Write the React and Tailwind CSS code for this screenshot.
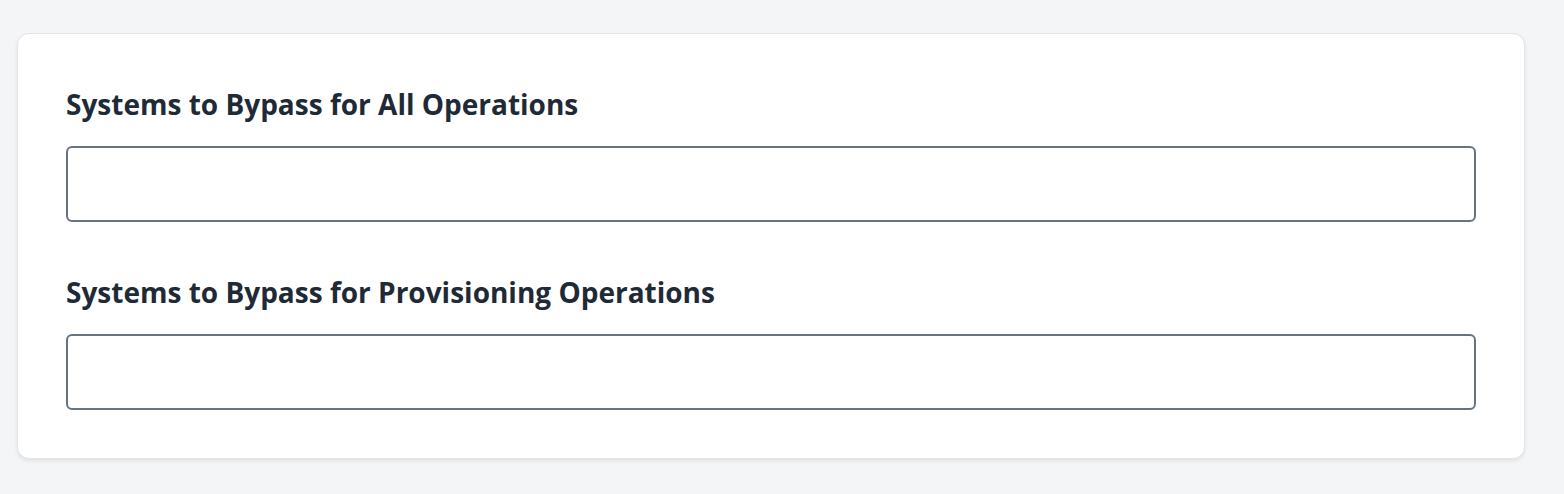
export default function App() {
  const labelCls = "block text-[28px] leading-[32px] font-bold text-[#1f2a37] tracking-[0px]";
  const inputCls = "block w-full h-[76px] rounded-[6px] border-2 border-[#667482] bg-white px-4 outline-none";
  return (
    <div className="min-h-[494px] w-full bg-[#f4f5f7] pt-[33px] pl-[17px] pr-[39px] pb-[35px]" style={{ fontFamily: "'Open Sans', 'Noto Sans', sans-serif" }}>
      <div className="rounded-[12px] border border-[#e1e4e8] bg-white shadow-[0_2px_4px_rgba(0,0,0,0.08)] px-[48px] pt-[54px] pb-[48px]">
        <div className="flex flex-col">
          <label className={labelCls}>Systems to Bypass for All Operations</label>
          <input className={inputCls + " mt-[26px]"} />
          <label className={labelCls + " mt-[54px]"}>Systems to Bypass for Provisioning Operations</label>
          <input className={inputCls + " mt-[26px]"} />
        </div>
      </div>
    </div>
  );
}
